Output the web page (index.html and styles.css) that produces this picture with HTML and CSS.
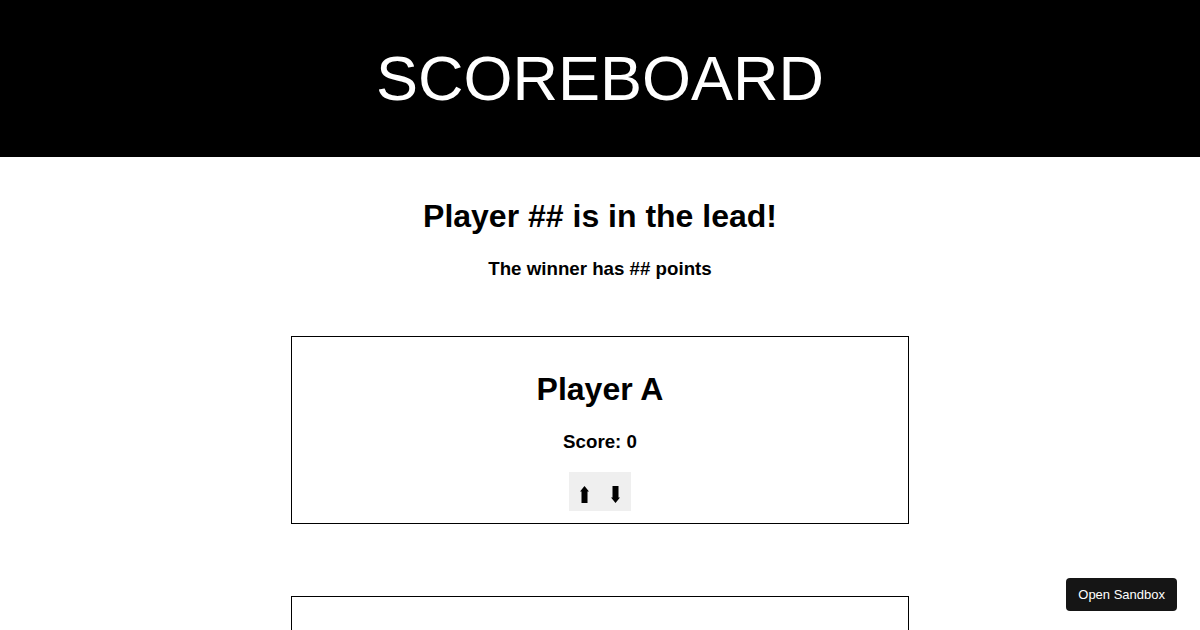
FILE: index.html
```html
<!DOCTYPE html>
<html lang="en">
<head>
<meta charset="UTF-8">
<meta name="viewport" content="width=device-width,initial-scale=1.0">
<title>Scoreboard</title>
<link rel="stylesheet" href="styles.css">
</head>
<body>
<header class="top">
    <h1>SCOREBOARD</h1>
</header>

<main class="board">
    <h2 class="lead">Player ## is in the lead!</h2>
    <h3 class="winner">The winner has ## points</h3>

    <div class="player">
        <h2 class="name">Player A</h2>
        <h3 class="score">Score: 0</h3>
        <div class="controls">
            <button class="arrow" aria-label="up">
                <svg width="9" height="17" viewBox="0 0 9 17"><polygon points="4.5,0 9,5.5 7.5,5.5 7.5,17 1.5,17 1.5,5.5 0,5.5"/></svg>
            </button><button class="arrow" aria-label="down">
                <svg width="9" height="17" viewBox="0 0 9 17"><polygon points="1.5,0 7.5,0 7.5,11.5 9,11.5 4.5,17 0,11.5 1.5,11.5"/></svg>
            </button>
        </div>
    </div>

    <div class="player">
        <h2 class="name">Player B</h2>
        <h3 class="score">Score: 0</h3>
    </div>
</main>

<a class="sandbox" href="#">Open Sandbox</a>
</body>
</html>
```
FILE: styles.css
```css
body {
    margin: 0;
    font-family: "Liberation Sans", Arial, sans-serif;
    color: #000;
    background: #fff;
    text-align: center;
}

.top {
    background: #000;
    color: #fff;
    padding: 42px 0 43px;
}

.top h1 {
    margin: 0;
    font-size: 63px;
    font-weight: normal;
}

.board {
    padding-bottom: 40px;
}

.lead {
    margin: 41px 0 0;
    font-size: 32px;
}

.winner {
    margin: 23px 0 0;
    font-size: 18.72px;
}

.player {
    width: 600px;
    margin: 56px auto 0;
    padding: 34px 8px 12px;
    border: 1px solid #000;
}

.player + .player {
    margin-top: 72px;
}

.name {
    margin: 0;
    font-size: 32px;
}

.score {
    margin: 23px 0 0;
    font-size: 18.72px;
}

.controls {
    display: flex;
    justify-content: center;
    margin-top: 19px;
}

.arrow {
    width: 31px;
    height: 39px;
    padding: 6px 0 0;
    border: none;
    background: #efefef;
    display: flex;
    align-items: center;
    justify-content: center;
}

.arrow svg {
    fill: #000;
}

.sandbox {
    position: fixed;
    right: 23px;
    bottom: 19px;
    height: 33px;
    line-height: 33px;
    padding: 0 12px;
    background: #151515;
    color: #fff;
    font-size: 13px;
    border-radius: 4px;
    text-decoration: none;
}
```
